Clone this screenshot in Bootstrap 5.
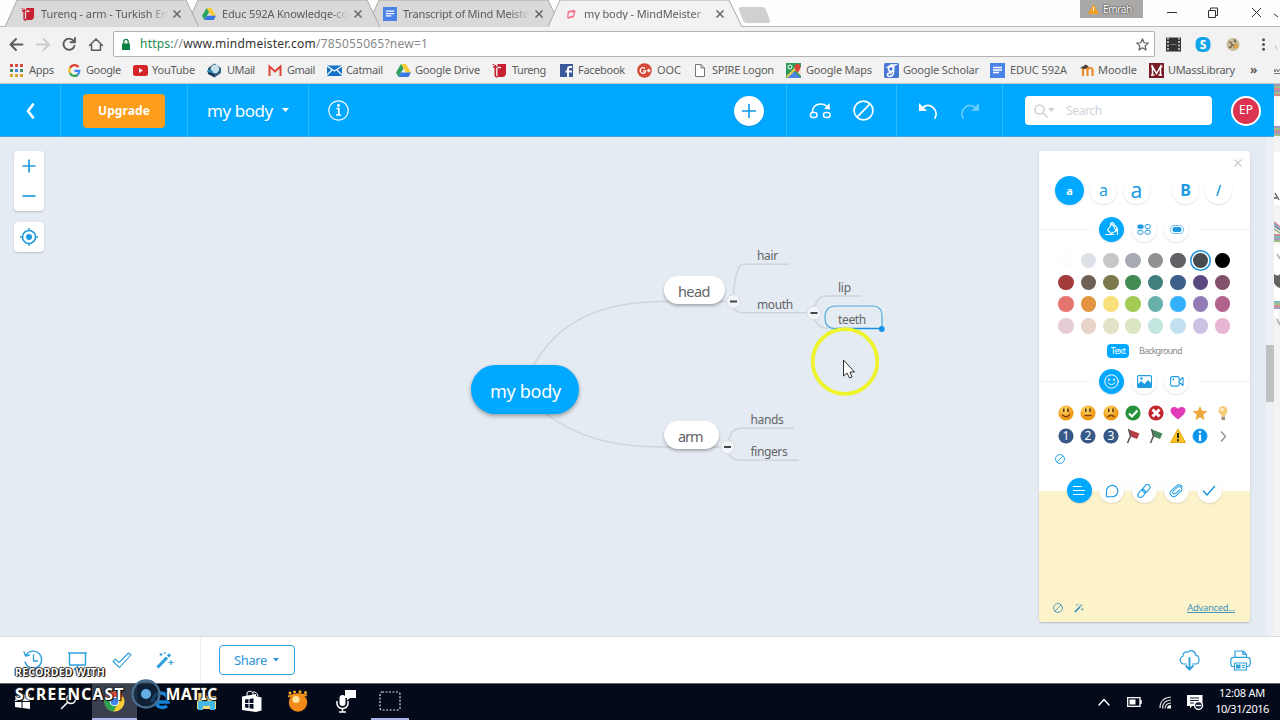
<!DOCTYPE html>
<html lang="en">
<head>
<meta charset="utf-8">
<meta name="viewport" content="width=device-width, initial-scale=1">
<title>my body - MindMeister</title>
<link href="https://cdn.jsdelivr.net/npm/bootstrap@5.3.0/dist/css/bootstrap.min.css" rel="stylesheet">
<style>
:root{--mm:#00a8ff;--ink:#1e9be0}
body{width:1280px;height:720px;overflow:hidden;background:#fff;font-family:"Noto Sans","Open Sans",sans-serif;font-size:11px;line-height:1.2;color:#5c5c5c}
svg{display:block;flex:none}
.fit{white-space:nowrap;display:inline-block}
.ln{fill:none;stroke:currentColor;stroke-linecap:round;stroke-linejoin:round}
/* browser */
.tabstrip{height:27px;background:#fefefe;padding-left:5px;border-bottom:1px solid #b9b9b9}
.tabitem{width:194px;height:27px;margin-right:-13px;position:relative;padding-left:16px;padding-top:1px}
.tabshape{position:absolute;left:0;top:0;z-index:-1}
.tabitem{isolation:isolate}
.tabtext{width:127px;margin-left:6px;-webkit-mask-image:linear-gradient(90deg,#000 85%,transparent);mask-image:linear-gradient(90deg,#000 85%,transparent)}
.newtab{width:27px;height:16px;background:#d0d0d0;transform:skewX(20deg);border-radius:3px;margin:3px 0 0 12px}
.who{width:63px;height:18px;background:#aaa7a7;color:#fff;font-size:10px;text-shadow:0 0 2px #333,0 0 1px #333;margin-left:310px}
.toolbar{height:33px;background:#f2f2f2}
.omni{width:1042px;height:26px;background:#fff;border:1px solid #b3b3b3;border-radius:2px;font-size:12px;margin-left:9px;padding-top:1px}
.bookmarks{height:24px;background:#f2f2f2;border-bottom:1px solid #c8c8c8;padding-left:10px;padding-bottom:3px;display:grid;align-items:center;
grid-template-columns:57px 66px 74px 61px 59px 69px 96px 67px 78px 57px 92px 98px 106px 90px 69px 101px 24px 6px}
.bookmarks>div{display:flex;align-items:center;overflow:visible;white-space:nowrap}
.bookmarks svg{width:15px;height:15px}
/* app */
.stage{height:552px}
.apphead{height:53px;background:var(--mm);color:#fff;border-bottom:1px solid #4aa5e0}
.apphead>.seg{height:53px;display:flex;align-items:center;border-right:1px solid #2cb8ff;flex:none;padding-top:1px}
.upgrade{width:82px;height:34px;background:#fd9d1c;border-radius:4px;font-weight:700;font-size:12px;color:#fff;padding-top:2px}
.searchbox{width:187px;height:29px;background:#fff;border-radius:4px;color:#cfd3da;font-size:12px;margin-top:1px}
.avatar{width:30px;height:30px;background:#dc3450;border:2px solid #fff;font-size:12px;margin-top:1px}
.board{background:#e5ebf2}
.map{position:absolute;left:0;top:0}
.node{position:absolute;white-space:nowrap;line-height:20px;font-size:12px;color:#636567}
.topic{background:#fff;border-radius:14px;box-shadow:0 2px 3px rgba(0,0,0,.28);height:28px;line-height:30px;font-size:14.500px;padding-left:14.5px}
.rootnode{background:var(--mm);color:#fff;border-radius:25px;height:49px;width:108.500px;font-size:18px;line-height:53px;padding-left:19.500px;box-shadow:0 2px 4px rgba(0,0,0,.35)}
.zoomctl{position:absolute;left:14px;top:14px;width:30px;color:var(--ink)}
.zoomctl>div{background:#fff;border-radius:4px;box-shadow:0 1px 2px rgba(0,0,0,.2)}
.panel{position:absolute;left:1039px;top:14px;width:211px;height:471px;background:#fff;border-radius:3px;box-shadow:0 1px 2px rgba(0,0,0,.22);color:var(--ink);overflow:hidden}
.rnd{width:25px;height:25px;border-radius:50%;background:#fff;display:flex;align-items:center;justify-content:center;box-shadow:0 1px 2px rgba(0,0,0,.13);flex:none}
.rnd.big{width:29px;height:29px}
.rnd.on{background:var(--mm);color:#fff}
.rnd:not(.on).big{width:27px;height:27px}
.modes{display:flex;align-items:center;gap:7.600px;padding-left:60px}
.ruled{background:linear-gradient(#f0f1f4,#f0f1f4) 0 50%/52px 1px no-repeat,linear-gradient(#f0f1f4,#f0f1f4) 100% 50%/50px 1px no-repeat}
.cells{display:grid;grid-template-columns:repeat(8,22.400px);justify-items:center;align-items:center;padding-left:15.800px}
.cells.sw{grid-auto-rows:21.900px}
.cells.em{grid-auto-rows:23px}
.dotc{width:15.500px;height:15.500px;border-radius:50%}
.dotc.sel{box-shadow:0 0 0 1.500px #fff,0 0 0 3px #1e93d8}
.note{background:#fdf3cb;height:131px}
.note .modes{margin-top:-13px;padding-left:27.500px}
.track{width:8px;background:#ecf0f4;padding-top:208px}
.thumb{height:57px;background:#bfc1c3}
/* bottom bars */
.footbar{height:47px;border-top:1px solid #d9dde1;background:#fff;color:#2d9fdc}
.sharebtn{width:76px;height:30px;border:1px solid #2d9fdc;border-radius:4px;font-size:13px;color:#2d93d8;padding-top:2px}
.taskbar{height:37px;background:#050a1b;border-top:1px solid #5f666d;color:#fff}
.taskicons{display:grid;grid-template-columns:45px 47px 45px 46px 46px 46px 46px 50px 38px;height:36px}
.taskicons>div{display:flex;align-items:center;justify-content:center;border-bottom:2px solid transparent}
.taskicons>.live{border-color:#aab5ee}
.mark-rec{position:absolute;left:15px;top:664px;color:#fff;font-weight:700;text-shadow:1px 1px 1px #000,-1px 0 1px #222,0 -1px 1px #333,1px 0 1px #222;z-index:5}
</style>
</head>
<body>
<svg width="0" height="0" class="position-absolute" aria-hidden="true">
<symbol id="tur" viewBox="0 0 15 15"><path d="M5.500 1H14v9q0 3-3 4H5.500z" fill="#c81f33"/><path d="M1 4h4.500M3.300 2v10q0 2 2.200 2M1.300 1v1" stroke="#c81f33" stroke-width="1.600" fill="none"/><path d="M5.500 4.500h3.500" stroke="#fff" stroke-width="1.400"/></symbol>
<symbol id="drive" viewBox="0 0 15 15"><path d="M5 1h5l5 8.500h-5z" fill="#f7cd33"/><path d="M5 1 0 9.500 2.500 14l5-8.500z" fill="#2aa35f"/><path d="M5 9.500h10L12.500 14h-10z" fill="#3b77e0"/></symbol>
<symbol id="doc" viewBox="0 0 15 15"><path d="M0 0h15v15H0z" fill="#4a82e8"/><path d="M3 4.500h9M3 7h9M3 9.500h6" stroke="#fff" stroke-width="1.300"/></symbol>
<symbol id="none" viewBox="0 0 20 20"><g class="ln"><circle cx="10" cy="10" r="9"/><path d="M4 16 16 4"/></g></symbol>
<symbol id="wand" viewBox="0 0 18 18"><path d="m1.500 16.500 9.500-10" stroke="currentColor" stroke-width="3.200" fill="none"/><path d="m12 5.500 2-2.300" stroke="currentColor" stroke-width="3" fill="none"/><path d="M15 9v5M12.500 11.500h5M5 2v3M3.500 3.500h3M9 1v2" stroke="currentColor" stroke-width="1.200"/></symbol>
<radialGradient id="yl" cx=".4" cy=".3"><stop offset="0" stop-color="#ffe070"/><stop offset="1" stop-color="#f09b18"/></radialGradient>
</svg>

<!-- tabs -->
<div class="tabstrip d-flex align-items-center" id="tabs"></div>

<!-- address row -->
<div class="toolbar d-flex align-items-center">
  <svg width="104" height="32" viewBox="0 0 104 32"><g class="ln" stroke-width="1.900"><path d="M22.500 16.500H11M16 11l-5.500 5.500L16 22"/><path stroke="#ccc" d="M37 16.500h11.500M43.500 11l5.500 5.500-5.500 5.500"/><path d="M73.500 12.700a5.600 5.600 0 1 0 1 5M75 10V14.300h-4.500"/><path stroke-width="1.500" d="m89.500 17.500 6.500-6.500 6.500 6.500M91.500 16.500v5.800h9v-5.800"/></g></svg>
  <div class="omni d-flex align-items-center">
    <svg style="margin-left:7px" width="10" height="13" viewBox="0 0 10 13"><path d="M1 5.500h8V12H1z" fill="#0b8043"/><path d="M2.800 6V3.500a2.200 2.200 0 0 1 4.400 0V6" fill="none" stroke="#0b8043" stroke-width="1.300"/></svg>
    <span class="fit" data-w="288" style="margin-left:9px"><span style="color:#1b8a4d">https:</span><span style="color:#888">//</span><span style="color:#333">www.mindmeister.com</span><span style="color:#888">/785055065?new=1</span></span>
    <svg class="ms-auto" style="margin-right:5px" width="13" height="13" viewBox="0 0 14 14"><path class="ln" stroke-width="1.300" d="m7 1 1.800 4.100 4.400.4-3.400 3 1 4.400L7 10.600l-3.800 2.300 1-4.400-3.400-3 4.400-.4z"/></svg>
  </div>
  <svg width="124" height="32" viewBox="1155 .500 124 32"><path d="M1166 10h15v14h-15z" fill="#333"/><path d="M1168 10v14M1179 10v14" stroke="#ddd" stroke-width="1.500" stroke-dasharray="2 1.500"/><path d="M1170.500 17h6" stroke="#777"/><rect x="1195.500" y="9.500" width="15" height="15" rx="6" fill="#12a5e8"/><text x="1203" y="21.500" font-size="12" font-weight="700" fill="#fff" text-anchor="middle">S</text><circle cx="1233" cy="17" r="6.500" fill="#c9bd96"/><path d="M1229 14l3 2M1234 12l2 3M1229 20l3-1M1234 20l3-3M1231 17l3 1" stroke="#705f4b" stroke-width="1.500"/><circle cx="1236" cy="19" r="2" fill="#e3a53a"/><circle cx="1263.500" cy="12.300" r="1.500" fill="#555"/><circle cx="1263.500" cy="17" r="1.500" fill="#555"/><circle cx="1263.500" cy="21.800" r="1.500" fill="#555"/><path d="M1275 18l2 4" stroke="#bbb"/></svg>
</div>

<!-- bookmarks -->
<div class="bookmarks">
  <div><svg viewBox="0 0 15 15"><g stroke-width="3" stroke-dasharray="3 2"><path d="M0 2.500h13" stroke="#d8483a"/><path d="M0 7.500h13" stroke="#4a8a60"/><path d="M0 12.500h13" stroke="#d9a32c"/></g><path d="M5 6h3v3H5z" fill="#4b7fe0"/></svg><span class="fit ms-1" data-w="25">Apps</span></div>
  <div><svg viewBox="0 0 15 15"><g fill="none" stroke-width="2.200"><path d="M11.500 4A5 5 0 0 0 3 5" stroke="#e04434"/><path d="M3 5a5.500 5.500 0 0 0 0 5" stroke="#f5bb1d"/><path d="M3 10a5 5 0 0 0 7.500 2" stroke="#34a853"/><path d="M10.500 12Q12.500 10 12.300 7.800H7.500" stroke="#4285f4"/></g></svg><span class="fit ms-1" data-w="35">Google</span></div>
  <div><svg viewBox="0 0 15 15"><rect y="2" width="15" height="11" rx="2.500" fill="#d6252a"/><path d="M6 5v5l4-2.500z" fill="#fff"/></svg><span class="fit ms-1" data-w="43">YouTube</span></div>
  <div><svg viewBox="0 0 15 15"><path d="M7.500.5 14 5v5l-6.500 4.500L1 10V5z" fill="#35607c"/><path d="M1 9l5 1 2 4.500L1 11z" fill="#18354f"/><circle cx="8" cy="6" r="4.200" fill="#c7e2ec"/><path d="M0 8.500 4 8l2 2" stroke="#3290bd" stroke-width="2" fill="none"/></svg><span class="fit" style="margin-left:5px" data-w="28">UMail</span></div>
  <div><svg viewBox="0 0 15 15"><path d="M1 3h12v10H1z" fill="#eee"/><path d="M1.500 13V3.500L7 8.500l5.500-5V13" fill="none" stroke="#dc4437" stroke-width="2"/></svg><span class="fit ms-1" data-w="28">Gmail</span></div>
  <div><svg viewBox="0 0 15 15"><path d="M0 2.500h15v10.500H0z" fill="#1572c6"/><path d="m0 3 7.500 5L15 3M0 12l5-5M15 12l-5-5" stroke="#fff" fill="none" stroke-width="1.200"/></svg><span class="fit ms-1" data-w="37">Catmail</span></div>
  <div><svg><use href="#drive"/></svg><span class="fit ms-1" data-w="65">Google Drive</span></div>
  <div><svg><use href="#tur"/></svg><span class="fit" style="margin-left:5px" data-w="34">Tureng</span></div>
  <div><svg viewBox="0 0 15 15"><path d="M1 1h13v13H1z" fill="#3b5998"/><path d="M9 14V8.500h4M6.500 8.500H9V6q0-2 2-2h2" stroke="#fff" stroke-width="1.900" fill="none"/></svg><span class="fit ms-1" data-w="47">Facebook</span></div>
  <div><svg viewBox="0 0 15 15"><circle cx="7.500" cy="7.500" r="7.300" fill="#d64937"/><path d="M8 5.500a2.800 2.800 0 1 0 .8 2.300H6M10 7.500h3.500M11.800 5.800v3.500" stroke="#fff" stroke-width="1.300" fill="none"/></svg><span class="fit" style="margin-left:5px" data-w="24">OOC</span></div>
  <div><svg viewBox="0 0 15 15"><path d="M1.500 1.500H7L10.500 5v8.500h-9zM7 1.500V5h3.500" fill="#fff" stroke="#777"/></svg><span class="fit" style="margin-left:3px" data-w="62">SPIRE Logon</span></div>
  <div><svg viewBox="0 0 15 15"><path d="M0 0h15v15H0z" fill="#2f9c5a"/><path d="M0 15 7.500 8 15 15z" fill="#4c84e8"/><path d="M9 7l6 6V4z" fill="#e8e3d5"/><path d="M1 14 10 5" stroke="#f7cf48" stroke-width="2"/><path d="M8.500 4a3 3 0 0 1 6 0q0 2-3 6-3-4-3-6z" fill="#dc4437"/><circle cx="4" cy="4" r="2" fill="none" stroke="#fff"/></svg><span class="fit" style="margin-left:5px" data-w="66">Google Maps</span></div>
  <div><svg viewBox="0 0 15 15"><rect width="15" height="15" rx="1.500" fill="#4878d2"/><path d="m1 5 6-4h7l-4 3" fill="#dbe6fa"/><circle cx="7" cy="5.800" r="2.600" fill="none" stroke="#fff" stroke-width="1.500"/><path d="M9.500 4v5q0 4-4 4.500-3-.5-1.500-3l4-1" fill="none" stroke="#fff" stroke-width="1.500"/></svg><span class="fit ms-1" data-w="76">Google Scholar</span></div>
  <div><svg><use href="#doc"/></svg><span class="fit" style="margin-left:5px" data-w="57">EDUC 592A</span></div>
  <div><svg viewBox="0 0 15 15"><path d="M3 13V7q0-2 2-2t2.500 2v6V7q0-2 2.500-2t2.500 2v6" fill="none" stroke="#ed8a28" stroke-width="2.200"/><path d="M0 5 6 1.500 9 4 4 6z" fill="#49423c"/></svg><span class="fit" style="margin-left:3px" data-w="39">Moodle</span></div>
  <div><svg viewBox="0 0 15 15"><path d="M0 0h15v15H0z" fill="#7b1a24"/><path d="M2 12h3.500M3.500 12V3.500l4 7 4-7V12M9.500 12H13M2 3.500h2M11 3.500h2.500" fill="none" stroke="#fff" stroke-width="1.500"/></svg><span class="fit ms-1" data-w="67">UMassLibrary</span></div>
  <div><b style="font-size:12px">»</b></div>
  <div><svg style="width:6px;height:9px" viewBox="0 0 6 9"><path d="m0 3 1 3 1.500-3L4 6l2-3M0 7.500h6" fill="none" stroke="#777"/></svg></div>
</div>

<!-- application -->
<div class="stage d-flex">
  <div class="d-flex flex-column" style="width:1274px">
    <div class="apphead d-flex align-items-center">
      <div class="seg justify-content-center" style="width:61px"><svg width="10" height="18" viewBox="0 0 10 18"><path d="M8 2.500 3 9l5 6.500" class="ln" stroke-width="2.700"/></svg></div>
      <div class="seg" style="width:127px;padding-left:22px"><div class="upgrade d-flex align-items-center justify-content-center"><span class="fit" data-w="52">Upgrade</span></div></div>
      <div class="seg" style="width:121px;padding-left:19px;font-size:17px"><span class="fit" style="padding-top:1px" data-w="66">my body</span><svg style="margin-left:9px" width="8" height="5"><path d="M0 0h7L3.500 4z" fill="#fff"/></svg></div>
      <div class="seg" style="width:478px;padding-left:19px">
        <svg width="21" height="21" viewBox="0 0 21 21"><circle cx="10.500" cy="10.500" r="9.700" class="ln" stroke-width="1.200"/><path d="M8.500 8.500h2.300V15M8 15h5.200" fill="none" stroke="#fff" stroke-width="1.700"/><circle cx="10.500" cy="5.500" r="1.400" fill="#fff"/></svg>
        <div class="ms-auto rnd" style="width:30px;height:30px;margin-right:22px"><svg width="14" height="14"><path d="M7 0v14M0 7h14" stroke="#0d98e6" stroke-width="1.600"/></svg></div>
      </div>
      <div class="seg" style="width:110px;padding-left:22px;gap:20px">
        <svg width="24" height="20" viewBox="0 0 24 20"><g class="ln" stroke-width="1.500"><rect x="1.500" y="11.500" width="6.500" height="5" rx="2.200"/><rect x="14.500" y="11.500" width="6.500" height="5" rx="2.200"/><path d="M3.500 10.500C4 2.500 14 1 18 5.500"/></g><path d="m20.500 2 .5 6.500-6-.5z" fill="#fff"/></svg>
        <svg width="21" height="21" stroke-width="1.600"><use href="#none" width="21" height="21"/></svg>
      </div>
      <div class="seg" style="width:106px;padding-left:21px;gap:20px">
        <svg width="21" height="20" viewBox="0 0 21 20"><path d="M5 6.500C12 1 21 9 17 17" class="ln" stroke-width="1.700"/><path d="M1 2v8h8z" fill="#fff"/></svg>
        <svg width="21" height="20" viewBox="0 0 21 20" opacity=".4"><path d="M16 6.500C9 1 0 9 4 17" class="ln" stroke-width="1.700"/><path d="M20 2v8h-8z" fill="#fff"/></svg>
      </div>
      <div class="searchbox d-flex align-items-center" style="margin-left:22px;padding-left:9px"><svg width="22" height="14" viewBox="0 0 22 14"><g class="ln" stroke-width="1.600"><circle cx="5.500" cy="5.500" r="4.500"/><path d="m9 9 4 4"/></g><path d="M14 4h7l-3.500 4z" fill="#cfd3da"/></svg><span class="fit" data-w="36" style="margin-left:10px;padding-top:1px">Search</span></div>
      <div class="avatar rounded-circle d-flex align-items-center justify-content-center" style="margin-left:19px"><span class="fit" data-w="14">EP</span></div>
    </div>
    <div class="d-flex flex-grow-1">
      <div class="board position-relative flex-grow-1">
        <svg class="map" width="1030" height="499" viewBox="0 137 1030 499"><g fill="none" stroke="#cfd4d9" stroke-width="1.500">
          <path d="M534 365C558 322 600 301.500 663 301.500H728M545 413C575 436 610 447 663 447H722M733.500 296C734 280 738 264.300 743 264.300H789M734 308Q736 312.700 743 312.700H808M815 306C817 299 820 296 827 296H862M815 320Q818 328 828 328.500M729 440Q731 428.300 741 428.300H794M729 454Q731 460.300 741 460.300H799"/></g>
          <g fill="#f1f4f8" stroke="#d5d9de"><circle cx="733.500" cy="301.500" r="7"/><circle cx="814" cy="313" r="7"/><circle cx="727.500" cy="447" r="7"/></g>
          <path d="M730 301.500h7M810.500 313h7M724 447h7" stroke="#444" stroke-width="1.800"/>
          <path d="M882 328.500V315.500Q882 306 872.500 306H836Q825 306 825 317.500T836 328.500z" fill="none" stroke="#4cabd9" stroke-width="1.200"/><path d="M836 328.500h46" stroke="#1792df" stroke-width="1.500"/><circle cx="881.800" cy="329" r="2.900" fill="#1792ea"/>
        </svg>
        <div class="node rootnode" style="left:470.500px;top:227.500px"><span class="fit" data-w="71">my body</span></div>
        <div class="node topic" style="left:663.500px;top:138.500px;width:61px"><span class="fit" data-w="32">head</span></div>
        <div class="node topic" style="left:663.500px;top:284px;width:55px"><span class="fit" data-w="25">arm</span></div>
        <div class="node" style="left:757px;top:109px"><span class="fit" data-w="21">hair</span></div>
        <div class="node" style="left:757px;top:158px"><span class="fit" data-w="36">mouth</span></div>
        <div class="node" style="left:838px;top:141px"><span class="fit" data-w="13">lip</span></div>
        <div class="node" style="left:838px;top:173px"><span class="fit" data-w="28">teeth</span></div>
        <div class="node" style="left:750.500px;top:273px"><span class="fit" data-w="33">hands</span></div>
        <div class="node" style="left:750.500px;top:305px"><span class="fit" data-w="37">fingers</span></div>
        <svg class="map" style="left:805px;top:187px" width="80" height="74" viewBox="805 324 80 74"><circle cx="845" cy="361.500" r="32.300" fill="none" stroke="#edf42a" stroke-width="3.700"/><path d="M843.500 360v16l3.500-3 2.500 5 2.500-1-2-5h4.500z" fill="#fff" stroke="#333"/></svg>

        <div class="zoomctl d-flex flex-column">
          <div class="d-flex flex-column align-items-center" style="height:60px;padding-top:8px;gap:22px"><svg width="14" height="14"><path d="M7 .5v13M.5 7h13" stroke="currentColor" stroke-width="1.700"/></svg><svg width="14" height="16"><path d="M.5 1h13" stroke="currentColor" stroke-width="1.700"/></svg></div>
          <div class="d-flex align-items-center justify-content-center" style="height:30px;margin-top:11px"><svg width="18" height="18" viewBox="0 0 18 18"><circle cx="9" cy="9" r="6.500" class="ln" stroke-width="1.500"/><circle cx="9" cy="9" r="3" fill="currentColor"/><path d="M9 0v3M9 15v3M0 9h3M15 9h3" stroke="currentColor" stroke-width="1.400"/></svg></div>
        </div>

        <div class="panel">
          <div class="d-flex justify-content-end" style="height:24px;padding:8px 8.500px 0 0"><svg width="8" height="8"><path d="m.5.5 7 7m0-7-7 7" stroke="#c9cbcd" stroke-width="1.200"/></svg></div>
          <div class="d-flex align-items-center" style="height:31px;padding-left:16px;gap:6px">
            <div class="rnd big on"><b style="font-size:11px">a</b></div>
            <div class="rnd big" style="font-size:16px">a</div>
            <div class="rnd big" style="font-size:21px;padding-top:1px">a</div>
            <div class="rnd big ms-3" style="font-size:16px"><b>B</b></div>
            <div class="rnd big" style="font-size:15px"><svg width="8" height="13"><path d="M5.500 1 2 12" stroke="currentColor" stroke-width="1.500"/></svg></div>
          </div>
          <div class="modes ruled" style="height:46px">
            <div class="rnd on"><svg width="16" height="16" viewBox="0 0 16 16"><path class="ln" stroke-width="1.100" d="M6.500 4.500V3a1.800 1.800 0 0 1 3.500 0v3M8 3 3.500 9l3.800 3.500 4.700-2.500L9.500 5zM2 13.500h8M12.500 8q1.500 3 .8 5.500M11 4.500q3 2 2.500 6"/></svg></div>
            <div class="rnd"><svg width="14" height="11" viewBox="0 0 14 11"><rect x=".5" y=".5" width="6" height="4.200" rx="1.500" fill="currentColor"/><g class="ln"><rect x="8" y=".5" width="5.300" height="4" rx="2"/><rect x=".7" y="6.300" width="5.300" height="4" rx="2"/><rect x="8" y="6.300" width="5.300" height="4" rx="2"/></g></svg></div>
            <div class="rnd"><svg width="14" height="9" viewBox="0 0 14 9"><rect x="2.500" y="2" width="9" height="5" rx="2" fill="currentColor"/><rect x=".5" y=".5" width="13" height="8" rx="3.500" class="ln" stroke-width=".7" stroke-dasharray="1 1"/></svg></div>
          </div>
          <div class="cells sw" id="swatches" style="height:85px;margin-top:-2.500px"></div>
          <div class="d-flex align-items-center" style="height:30.500px;padding:3px 0 0 68px;font-size:9px;color:#8b8d8f"><div class="rounded-1 text-white d-flex align-items-center justify-content-center" style="background:var(--mm);width:22px;height:14px"><span class="fit" data-w="15">Text</span></div><span class="fit" data-w="43" style="margin-left:10px">Background</span></div>
          <div class="modes ruled" style="height:32px">
            <div class="rnd on"><svg width="15" height="15" viewBox="0 0 15 15"><g class="ln"><circle cx="7.500" cy="7.500" r="6.700"/><path d="M4 8.500q3.500 4.500 7 0"/></g><circle cx="5" cy="5.700" r="1" fill="#fff"/><circle cx="10" cy="5.700" r="1" fill="#fff"/></svg></div>
            <div class="rnd"><svg width="15" height="13" viewBox="0 0 15 13"><rect x=".6" y=".6" width="13.800" height="11.800" rx="1" class="ln" stroke-width="1.100"/><path d="m1 12V9l3-3 3.500 3 3.500-4 3.500 4v3z" fill="currentColor"/><circle cx="4.500" cy="3.500" r="1.200" fill="currentColor"/></svg></div>
            <div class="rnd"><svg width="14" height="11" viewBox="0 0 14 11"><g class="ln" stroke-width="1.100"><rect x=".6" y=".6" width="8.500" height="9.500" rx="1.500"/><path d="m9.500 4.500 3.500-3v8l-3.500-3"/></g><circle cx="3.200" cy="3.200" r="1" fill="currentColor"/></svg></div>
          </div>
          <div class="cells em" style="padding-top:4px;height:51px">
            <svg width="16" height="16" viewBox="0 0 16 16"><circle cx="8" cy="8" r="7.600" fill="url(#yl)"/><path d="M5.800 3.500v3.500M10 3.500v3.500" stroke="#4b2c08" stroke-width="1.500"/><path d="M4 9.500q4 4.500 8 0" fill="none" stroke="#7b3d0e" stroke-width="1.300"/></svg>
            <svg width="16" height="16" viewBox="0 0 16 16"><circle cx="8" cy="8" r="7.600" fill="url(#yl)"/><path d="M5.800 3.500v3.500M10 3.500v3.500" stroke="#4b2c08" stroke-width="1.500"/><path d="M4.500 10.500h7" stroke="#7b3d0e" stroke-width="1.300"/></svg>
            <svg width="16" height="16" viewBox="0 0 16 16"><circle cx="8" cy="8" r="7.600" fill="url(#yl)"/><path d="M5.800 3.500v3.500M10 3.500v3.500" stroke="#4b2c08" stroke-width="1.500"/><path d="M4.500 12q3.500-3.500 7 0" fill="none" stroke="#7b3d0e" stroke-width="1.300"/></svg>
            <svg width="16" height="16" viewBox="0 0 16 16"><circle cx="8" cy="8" r="7.600" fill="#26923c"/><path d="m4 8.500 3 3 5.500-6" fill="none" stroke="#fff" stroke-width="2.200"/></svg>
            <svg width="16" height="16" viewBox="0 0 16 16"><circle cx="8" cy="8" r="7.600" fill="#c0262b"/><path d="m4.500 4.500 7 7m0-7-7 7" stroke="#fff" stroke-width="3"/></svg>
            <svg width="16" height="16" viewBox="0 0 16 16"><path d="M8 14.500C3 10.500.3 8 .5 5 1 1.500 6 1 8 4c2-3 7-2.500 7.500 1 .2 3-2.500 5.500-7.500 9.500z" fill="#e13bb8"/></svg>
            <svg width="16" height="16" viewBox="0 0 16 16"><path d="m8 .8 2 5 5.500.5-4.300 3.500 1.500 5.400L8 12.300l-4.700 2.900 1.500-5.400L.5 6.300 6 5.800z" fill="#f0a53d"/></svg>
            <svg width="16" height="16" viewBox="0 0 16 16"><path d="M8 1a4.800 4.800 0 0 1 4.500 5C12.500 8.500 10 9 10 11H6.500C6.500 9 3.500 8.500 3.500 6A4.800 4.800 0 0 1 8 1z" fill="#f6cc79"/><path d="M6.500 11.500H10V15H6.500z" fill="#a58d70"/><circle cx="7" cy="4.500" r="1.800" fill="#fff2cf"/></svg>
            <svg width="16" height="16" viewBox="0 0 16 16"><circle cx="8" cy="8" r="7.600" fill="#375988"/><text x="8" y="12.200" font-size="12" fill="#fff" text-anchor="middle">1</text></svg>
            <svg width="16" height="16" viewBox="0 0 16 16"><circle cx="8" cy="8" r="7.600" fill="#375988"/><text x="8" y="12.200" font-size="12" fill="#fff" text-anchor="middle">2</text></svg>
            <svg width="16" height="16" viewBox="0 0 16 16"><circle cx="8" cy="8" r="7.600" fill="#375988"/><text x="8" y="12.200" font-size="12" fill="#fff" text-anchor="middle">3</text></svg>
            <svg width="16" height="16" viewBox="0 0 16 16"><path d="m4 1.500 10.500 4L12 11 5.500 8.500z" fill="#b54048"/><path d="M3.500 1 5.500 8 2.500 15" fill="none" stroke="#555" stroke-width="1.500"/></svg>
            <svg width="16" height="16" viewBox="0 0 16 16"><path d="m4 1.500 10.500 4L12 11 5.500 8.500z" fill="#488a5b"/><path d="M3.500 1 5.500 8 2.500 15" fill="none" stroke="#555" stroke-width="1.500"/></svg>
            <svg width="16" height="16" viewBox="0 0 16 16"><path d="M8 1 15.500 14.500H.5z" fill="#fbc21d" stroke="#e3a714"/><path d="M8 5v5M8 11.300v1.900" stroke="#222" stroke-width="1.800"/></svg>
            <svg width="16" height="16" viewBox="0 0 16 16"><circle cx="8" cy="8" r="7.300" fill="#0b94ec" stroke="#7cc6f2" stroke-dasharray="1.500 1"/><path d="M8 3v2M8 6.500V13" stroke="#fff" stroke-width="2.300"/></svg>
            <svg width="16" height="16" viewBox="0 0 16 16"><path d="m6 3.500 4.500 5L6 13.500" fill="none" stroke="#8d9298" stroke-width="1.400"/></svg>
          </div>
          <div style="height:43px;padding:6px 0 0 16px"><svg width="10" height="10" stroke-width="1.800"><use href="#none" width="10" height="10"/></svg></div>
          <div class="note d-flex flex-column">
            <div class="d-flex mt-auto align-items-center" style="height:28px;padding:0 15px 0 14px;gap:11px;font-size:9.500px;color:#4596bd"><svg width="10" height="10" stroke-width="1.800"><use href="#none" width="10" height="10"/></svg><svg width="10" height="10"><use href="#wand" width="10" height="10"/></svg><span class="fit ms-auto text-decoration-underline" data-w="48">Advanced...</span></div>
          </div>
          <div class="modes" style="position:absolute;left:0;top:327px;padding-left:27.500px">
            <div class="rnd on"><svg width="14" height="11"><path d="M1 1.500h9M1 5.500h12M1 9.500h11" stroke="#fff" stroke-width="1.200"/></svg></div>
            <div class="rnd"><svg width="14" height="14" viewBox="0 0 14 14"><path class="ln" stroke-width="1.100" d="M1.500 12.800V7A5.700 5.700 0 1 1 7 12.800z"/></svg></div>
            <div class="rnd"><svg width="14" height="14" viewBox="0 0 14 14"><g class="ln" stroke-width="1.100" transform="rotate(-48 7 7)"><rect x="-.8" y="4.400" width="8.800" height="5.200" rx="2.600"/><rect x="6" y="4.400" width="8.800" height="5.200" rx="2.600"/></g></svg></div>
            <div class="rnd"><svg width="15" height="14" viewBox="0 0 15 14"><path class="ln" stroke-width="1" transform="rotate(-42 7 7)" d="M12 3.500H4a3.500 3.500 0 0 0 0 7h7a2.700 2.700 0 0 0 0-5.300H5a1.600 1.600 0 0 0 0 3.300h5.500M12 3.500q3 1 2.300 4.500"/></svg></div>
            <div class="rnd"><svg width="14" height="12"><path class="ln" stroke-width="1.500" d="m1.500 6 3.500 4 7.500-8.500"/></svg></div>
          </div>
        </div>
      </div>
      <div class="track"><div class="thumb"></div></div>
    </div>
  </div>
  <svg width="6" height="552" viewBox="0 84 6 552"><path fill="#f4f3f3" d="M0 84h6v552H0z"/><path fill="#fff" d="M0 97h6v28H0zM0 152h6v53H0zM0 245h6v60q-3 20-6 10z"/><g stroke-width="1.300"><path stroke="#8b79a8" d="M0 85h6M0 91h6M0 127h6M0 133h6M0 226l6 4M0 239h6M0 308h6"/><path stroke="#83ad64" d="M0 87h6M0 93h6M0 129h6M0 135h6M0 229l6 4M0 241h6M0 304h6"/><path stroke="#c96770" d="M0 89h6M0 95h6M0 131h6M0 222l6 5M0 235h6M0 306h6"/><path stroke="#54a7aa" d="M0 224l6 5M0 237h6M0 302h6"/><path stroke="#555" d="M1 193l4 7M0 198h3"/></g><path fill="#656362" d="M0 274q4 3 6 0v14q-4-1-6-5z"/><path stroke="#bbb" stroke-width="2" d="m3 254 3 5M3 319l3 6"/></svg>
</div>

<!-- map footer -->
<div class="footbar d-flex align-items-center">
  <div class="d-flex align-items-center h-100 border-end" style="width:201px;padding-left:23px;border-color:#eceef0!important">
    <svg width="20" height="20" viewBox="0 0 20 20"><g class="ln" stroke-width="1.300"><path d="M3 5a8.500 8.500 0 1 1-1 7M1 2l1.500 4L6.500 5M10.500 5v6h4"/></g></svg>
    <svg style="margin-left:25px" width="19" height="19" viewBox="0 0 19 19"><g class="ln" stroke-width="1.400"><path d="M1.500 2h16v12h-16zM9.500 14v3.500M6 18h7M.5 2h18"/></g></svg>
    <svg style="margin-left:25px" width="20" height="17" viewBox="0 0 20 17"><path class="ln" stroke-width="1.100" d="m1 9.500 2.500-2.300 3.500 3.300L16.500 1 19 3 7.500 15.500z"/></svg>
    <svg style="margin-left:24px" width="18" height="18"><use href="#wand" width="18" height="18"/></svg>
  </div>
  <div class="sharebtn d-flex align-items-center justify-content-center" style="margin-left:18px"><span class="fit" data-w="33">Share</span><svg style="margin-left:6px;margin-top:-2px" width="7" height="4"><path d="M0 0h6L3 3.500z" fill="currentColor"/></svg></div>
  <svg class="ms-auto" width="21" height="22" viewBox="0 0 21 22"><g class="ln" stroke-width="1.200"><path d="M7.500 15H5a4 4 0 0 1-1-7.800C3.500 4 6.500 2 9 3.200c2-3 7.500-1.500 7.500 3C21 7 21.500 15 16 15h-2.500"/><path stroke-width="1.800" d="M10.500 9v11M7 17l3.500 3.500L14 17"/></g></svg>
  <svg style="margin:0 29px 0 30px" width="21" height="21" viewBox="0 0 21 21"><g class="ln" stroke-width="1.200"><path d="M5 7V1h8l3.500 3.500V7M13 1v3.500h3.500M4 16.500H2.500Q.8 16.500.8 13v-3Q1 7.300 4 7.300h13q3 0 3.200 2.700v3q0 3.500-2 3.500H17"/><path d="M4.500 13h12v7h-12z"/></g><path d="M6 14.500h4.500v4H6z" fill="currentColor"/><path d="M12 15.500h3M12 17.500h3" stroke="currentColor"/></svg>
</div>

<!-- desktop taskbar -->
<div class="taskbar d-flex">
  <div class="taskicons">
    <div><svg width="15" height="15"><path d="M0 2 6.500 1v6H0zM7.500.8 15 0v7H7.500zM0 8h6.500v6L0 13zM7.500 8H15v7l-7.500-1z" fill="#fff"/></svg></div>
    <div><svg width="17" height="17"><g class="ln" stroke-width="1.500"><circle cx="11" cy="6" r="4.500"/><path d="m7.500 9.500-6 6"/></g></svg></div>
    <div class="live" style="background:#3b4051"><svg width="21" height="21" viewBox="0 0 22 22"><circle cx="11" cy="11" r="10.500" fill="#f9cb35"/><path d="M11 11 1.900 5.700A10.500 10.500 0 0 1 20.500 6.500H11z" fill="#e14a39"/><path d="M11 11 1.900 5.700A10.500 10.500 0 0 0 10 21.500L14 14z" fill="#2da253"/><circle cx="11" cy="11" r="5" fill="#fff"/><circle cx="11" cy="11" r="4" fill="#4285e8"/></svg></div>
    <div><svg width="20" height="20" viewBox="0 0 20 20"><path d="M2 11C3 5 7 2 10.500 2c5 0 7.500 4 7.500 9H6c.5 5 6 7 11 4" fill="none" stroke="#1685d9" stroke-width="3.400"/></svg></div>
    <div><svg width="21" height="19"><path d="M1 1h8l2 3h9v13H1z" fill="#f5d675"/><path d="M2 9h17v9h-5v-4H7v4H2z" fill="#45b8e4"/></svg></div>
    <div><svg width="20" height="23" viewBox="0 0 20 23"><path d="M0 6.500 14 4v18L0 20zM14 6l5.500 1.500v13L14 22z" fill="#fff"/><path d="M5 6V2.500Q8-.5 11 2.500V5M11 2q4-.5 5 4" fill="none" stroke="#fff"/><path d="M3 9.500 6.500 9v4H3zM7.500 9l4-.8V13h-4zM3 14h3.500v4L3 17.500zM7.500 14h4v5l-4-.8z" fill="#091329"/></svg></div>
    <div><svg width="22" height="22" viewBox="0 0 22 22"><circle cx="11" cy="12.500" r="9.200" fill="#f28b19"/><circle cx="9" cy="9.500" r="3.600" fill="#ffe59b"/><path d="M1 6.500q9-3.500 19-1" fill="none" stroke="#ef951e" stroke-width="2"/><g fill="#ffad2a"><circle cx="3" cy="3" r="1.500"/><circle cx="7.500" cy="2" r="1.500"/><circle cx="13" cy="1.800" r="1.500"/><circle cx="18.500" cy="2.500" r="1.500"/></g></svg></div>
    <div><svg width="20" height="23" viewBox="0 0 20 23"><path d="M9 0h11v8h-6l-3 2.500V8H9z" fill="#fff"/><rect x="3.500" y="5" width="6" height="11" rx="3" fill="#fff"/><path d="M1 11v3q1 4.500 5.500 4.500T12 14v-3M6.500 18v4M3 22h7" fill="none" stroke="#fff" stroke-width="1.500"/></svg></div>
    <div class="live"><svg style="margin-right:1px" width="22" height="20"><rect x="1" y="1" width="20" height="18" rx="2" fill="none" stroke="#ddd" stroke-width="1.200" stroke-dasharray="2 1.500"/></svg></div>
  </div>
  <div class="ms-auto d-flex align-items-center">
    <svg width="12" height="8"><path d="m1 7 5-5.500L11 7" class="ln" stroke-width="1.400"/></svg>
    <svg style="margin-left:17px" width="15" height="10"><path d="M.7.700h12.300v8.600H.7z" fill="none" stroke="#fff" stroke-width="1.300"/><path d="M2.500 2.500h6v5h-6zM13 3h1.700v4H13z" fill="#fff"/></svg>
    <svg style="margin-left:17px" width="13" height="13"><g fill="none" stroke="#ddd" stroke-width="1.200"><path d="M1 12Q1 2 12 1M3.500 12.500q0-8 8.500-8.500M6 12.500q0-5 6-5.500"/></g><path d="M8 12.500q0-3.500 4-3.500v3.500z" fill="#fff"/></svg>
    <svg style="margin-left:15px" width="17" height="17"><path d="M0 1h15.500v11H5l-2 2.500V12H0z" fill="#fff"/><path d="M3 4h9M3 6.500h9M3 9h4" stroke="#111b31" stroke-width="1.200"/><circle cx="11.500" cy="11.500" r="4" fill="#111b31" stroke="#fff" stroke-width="1.400"/><path d="M9 11.500h5" stroke="#fff" stroke-width="1.300"/></svg>
    <div class="text-center" style="width:54px;margin:-3px 11px 0 11px;font-size:11px;line-height:15.500px"><span class="fit" data-w="46">12:08 AM</span><br><span class="fit" data-w="54">10/31/2016</span></div>
  </div>
</div>

<!-- recorder watermark -->
<div class="mark-rec">
  <div style="font-size:10.500px;line-height:16px"><span class="fit" data-w="90">RECORDED WITH</span></div>
  <div class="d-flex align-items-center" style="font-size:15.500px;height:28px"><span class="fit" data-w="109">SCREENCAST</span><svg style="margin:0 5px 0 6px" width="30" height="30" viewBox="0 0 30 30"><circle cx="15" cy="15" r="13.500" fill="#14283f" fill-opacity=".75" stroke="#496e91" stroke-width="2.300"/><circle cx="15" cy="15" r="5" fill="#64aee3"/></svg><span class="fit" data-w="52">MATIC</span></div>
</div>

<script src="https://cdn.jsdelivr.net/npm/bootstrap@5.3.0/dist/js/bootstrap.bundle.min.js"></script>
<script>
const tabs=[["Tureng - arm - Turkish En",'<use href="#tur"/>',127],["Educ 592A Knowledge-co",'<use href="#drive"/>',126],["Transcript of Mind Meiste",'<use href="#doc"/>',126],["my body - MindMeister",'<path d="M4 4.500 11 3q2 1 1 3l-1.500 5-6 1.500q-2-1-1-3.500zM5.500 6l-1 4.500 5-1 1-4z" fill="#f56f8a" fill-rule="evenodd"/>',117]];
document.getElementById("tabs").innerHTML=tabs.map((t,i)=>`<div class="tabitem d-flex align-items-center" style="z-index:${i==3?6:4-i}"><svg class="tabshape" width="194" height="28"><path d="M0 27 12 0H181l13 27" fill="${i==3?"#f2f2f2":"#d9d9d9"}" stroke="#aaa"/></svg><svg width="14" height="14" viewBox="0 0 15 15">${t[1]}</svg><div class="tabtext"><span class="fit" data-w="${t[2]}">${t[0]}</span></div><svg style="margin-left:5px" width="8" height="8"><path d="m.5.5 7 7m0-7-7 7" stroke="#666" stroke-width="1.500"/></svg></div>`).join("")+`<div class="newtab"></div><div class="who d-flex align-items-center align-self-start gap-1 px-2" style="margin-left:${1080-768}px"><svg width="11" height="10"><path d="M5.500 0 11 10H0z" fill="#f5a01e"/><path d="M5.500 3v4" stroke="#fff"/></svg><span class="fit" data-w="29">Emrah</span></div><svg class="ms-auto" width="116" height="26" viewBox="1164 0 116 26"><g fill="none" stroke="#333"><path d="M1167 12.500h10M1208.500 10.500h7v7h-7zM1210.500 10V8h7v7.500h-2M1252 8l9 9m0-9-9 9M1274 14l4 3"/></g></svg>`;
const cols="#fdfdfd #dde2e9 #c5c7c8 #a7aab0 #919191 #606266 #474b50 #000 #a23b3b #6f6055 #7b784a #418a52 #417f7f #3c5f8a #5b4a80 #81516a #e57370 #e39440 #f8e07a #a4cb58 #69b0ad #33b2fb #937cb5 #b0638b #e6cdd4 #e7d3c8 #e3e1c6 #dae6c3 #c3e6e1 #c3e0f0 #cdc1e4 #e7b6d3".split(" ");
document.getElementById("swatches").innerHTML=cols.map((c,i)=>`<div class="dotc${i==6?" sel":""}" style="background:${c}"></div>`).join("");
// tighten or loosen each label to its column measure
document.querySelectorAll(".fit").forEach(e=>{const n=e.textContent.length,w=e.getBoundingClientRect().width;e.style.letterSpacing=((+e.dataset.w-w)/(n-.5)).toFixed(3)+"px"});
</script>
</body>
</html>
